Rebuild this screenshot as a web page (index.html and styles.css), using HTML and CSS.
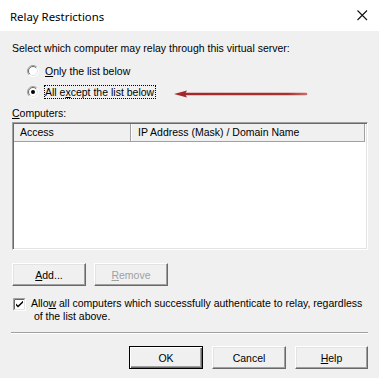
FILE: index.html
```html
<!DOCTYPE html>
<html>
<head>
<meta charset="utf-8">
<link rel="stylesheet" href="styles.css">
</head>
<body>
<div class="window">
  <div class="titlebar">
    <span class="title">Relay Restrictions</span>
    <svg class="close" width="11" height="11" viewBox="0 0 11 11"><path d="M0.5 0.5 L10 10 M10 0.5 L0.5 10" stroke="#111" stroke-width="1.1" fill="none"/></svg>
  </div>
  <div class="content">
    <p class="prompt">Select which computer may relay through this virtual server:</p>
    <div class="radios">
      <div class="radio">
        <svg class="rb" width="12" height="12" viewBox="0 0 12 12">
          <circle cx="6" cy="6" r="5.5" fill="#fff"/>
          <path d="M2.1 9.9 A5.5 5.5 0 0 1 9.9 2.1" stroke="#a0a0a0" fill="none"/>
          <path d="M2.8 9.2 A4.5 4.5 0 0 1 9.2 2.8" stroke="#696969" fill="none"/>
          <path d="M9.9 2.1 A5.5 5.5 0 0 1 2.1 9.9" stroke="#ffffff" fill="none"/>
          <path d="M9.2 2.8 A4.5 4.5 0 0 1 2.8 9.2" stroke="#e3e3e3" fill="none"/>
        </svg>
        <span class="rlabel"><u>O</u>nly the list below</span>
      </div>
      <div class="radio">
        <svg class="rb" width="12" height="12" viewBox="0 0 12 12">
          <circle cx="6" cy="6" r="5.5" fill="#fff"/>
          <path d="M2.1 9.9 A5.5 5.5 0 0 1 9.9 2.1" stroke="#a0a0a0" fill="none"/>
          <path d="M2.8 9.2 A4.5 4.5 0 0 1 9.2 2.8" stroke="#696969" fill="none"/>
          <path d="M9.9 2.1 A5.5 5.5 0 0 1 2.1 9.9" stroke="#ffffff" fill="none"/>
          <path d="M9.2 2.8 A4.5 4.5 0 0 1 2.8 9.2" stroke="#e3e3e3" fill="none"/>
          <circle cx="6" cy="6" r="2" fill="#000"/>
        </svg>
        <span class="rlabel focus">All e<u>x</u>cept the list below</span>
      </div>
      <svg class="arrow" width="134" height="10" viewBox="0 0 134 10">
        <defs>
          <linearGradient id="fade" gradientUnits="userSpaceOnUse" x1="0" y1="0" x2="134" y2="0">
            <stop offset="0" stop-color="#a3262a"/>
            <stop offset="0.85" stop-color="#a8302f"/>
            <stop offset="1" stop-color="#c9706f"/>
          </linearGradient>
        </defs>
        <path d="M8 5 L132 5" stroke="url(#fade)" stroke-width="2.6" stroke-linecap="round"/>
        <path d="M0 5 L13 1.6 L11 5 L13 8.4 Z" fill="#a3262a"/>
      </svg>
    </div>
    <div class="label"><u>C</u>omputers:</div>
    <div class="listbox">
      <div class="lvheader">
        <div class="col col1">Access</div>
        <div class="col col2">IP Address (Mask) / Domain Name</div>
      </div>
      <div class="lvbody"></div>
    </div>
    <div class="btnrow">
      <button class="btn"><u>A</u>dd...</button>
      <button class="btn disabled"><u>R</u>emove</button>
    </div>
    <div class="check">
      <svg class="cb" width="13" height="13" viewBox="0 0 13 13">
        <rect x="0" y="0" width="13" height="13" fill="#fff"/>
        <path d="M0.5 12.5 V0.5 H12.5" stroke="#a0a0a0" fill="none"/>
        <path d="M1.5 11.5 V1.5 H11.5" stroke="#696969" fill="none"/>
        <path d="M0.5 12.5 H12.5 V0.5" stroke="#ffffff" fill="none"/>
        <path d="M1.5 11.5 H11.5 V1.5" stroke="#e3e3e3" fill="none"/>
        <path d="M3 5.5 L5 7.6 L10 2.8 L10 4.8 L5 9.6 L3 7.5 Z" fill="#000"/>
      </svg>
      <div class="ctext">Allo<u>w</u> all computers which successfully authenticate to relay, regardless<br>&nbsp;of the list above.</div>
    </div>
    <div class="sep"></div>
    <div class="footer">
      <button class="btn default">OK</button>
      <button class="btn">Cancel</button>
      <button class="btn help"><u>H</u>elp</button>
    </div>
  </div>
</div>
</body>
</html>
```
FILE: styles.css
```css
html, body {
  margin: 0;
  padding: 0;
}
body {
  width: 379px;
  height: 378px;
  overflow: hidden;
  background: #f0f0f0;
  font-family: "Liberation Sans", Arial, sans-serif;
  font-size: 10.5px;
  color: #000;
}
.window {
  display: flex;
  flex-direction: column;
  height: 378px;
}
.titlebar {
  height: 31px;
  background: #fff;
  display: flex;
  align-items: center;
  justify-content: space-between;
  padding: 0 11px 0 10px;
}
.title {
  font-family: "Noto Sans", "Open Sans", sans-serif;
  font-size: 11.4px;
  color: #000;
  margin-top: 1px;
}
.close {
  display: block;
}
.content {
  padding: 0 11px 0 12px;
  display: flex;
  flex-direction: column;
}
.prompt {
  margin: 10px 0 0;
  line-height: 14px;
}
.radios {
  position: relative;
  margin-top: 8px;
  padding-left: 15px;
  display: flex;
  flex-direction: column;
  gap: 5px;
}
.radio {
  display: flex;
  align-items: center;
  height: 16px;
}
.rb {
  display: block;
  margin-right: 5px;
}
.rlabel {
  border: 1px dotted transparent;
  padding: 0 1px 0 0;
  line-height: 12px;
}
.rlabel.focus {
  border-color: #000;
}
.arrow {
  position: absolute;
  left: 162px;
  top: 26px;
}
.label {
  margin-top: 6px;
  line-height: 14px;
}
.listbox {
  margin-top: 2px;
  width: 356px;
  height: 128px;
  box-sizing: border-box;
  border-style: solid;
  border-width: 1px;
  border-color: #a0a0a0 #ffffff #ffffff #a0a0a0;
  box-shadow: inset 1px 1px 0 #696969, inset -1px -1px 0 #e3e3e3;
  background: #fff;
  padding: 1px 2px 1px 1px;
  display: flex;
  flex-direction: column;
}
.lvheader {
  display: flex;
  height: 17px;
  background: #f0f0f0;
  border-bottom: 1px solid #a0a0a0;
  flex-shrink: 0;
}
.col {
  line-height: 17px;
  padding-left: 6px;
  box-sizing: border-box;
}
.col1 {
  width: 117px;
  border-right: 1px solid #a0a0a0;
  box-shadow: 1px 0 0 #fff;
}
.col2 {
  flex: 1;
  padding-left: 7px;
  border-right: 1px solid #a0a0a0;
}
.lvbody {
  flex: 1;
}
.btnrow {
  display: flex;
  gap: 8px;
  margin-top: 13px;
}
.btn {
  font-family: "Liberation Sans", Arial, sans-serif;
  font-size: 10.5px;
  width: 74px;
  height: 23px;
  margin: 0;
  padding: 0;
  background: #f0f0f0;
  color: #000;
  border-style: solid;
  border-width: 1px;
  border-color: #ffffff #696969 #696969 #ffffff;
  box-shadow: inset -1px -1px 0 #a0a0a0, inset 1px 1px 0 #e3e3e3;
  box-sizing: border-box;
}
.btn.disabled {
  color: #a0a0a0;
}
.btn.default {
  border: 1px solid #000;
  box-shadow: inset 1px 1px 0 #fff, inset -1px -1px 0 #696969, inset -2px -2px 0 #a0a0a0;
}
.check {
  display: flex;
  align-items: flex-start;
  margin-top: 11px;
  padding-left: 1px;
}
.cb {
  display: block;
  margin-top: 1px;
  margin-right: 5px;
  flex-shrink: 0;
}
.ctext {
  line-height: 13px;
  white-space: nowrap;
}
.sep {
  margin: 9px 0 0 -1px;
  height: 1px;
  background: #a0a0a0;
  border-bottom: 1px solid #fff;
}
.footer {
  display: flex;
  justify-content: flex-end;
  margin-top: 12px;
}
.footer .btn {
  margin-left: 9px;
}
.footer .help {
  width: 73px;
}
```
